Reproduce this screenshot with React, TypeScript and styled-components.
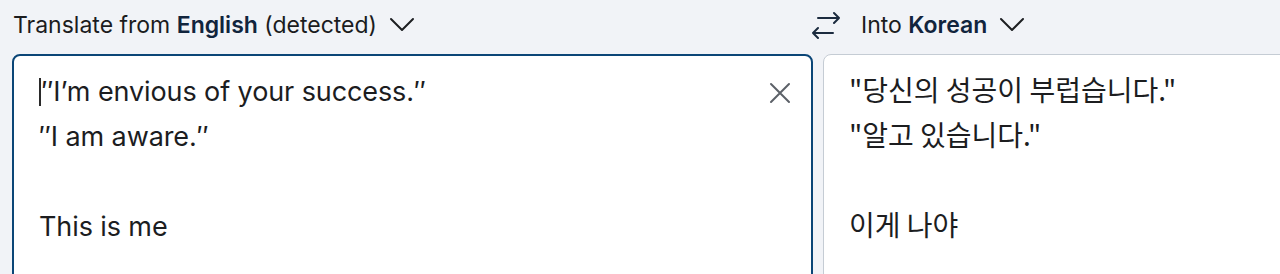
import styled, { createGlobalStyle } from "styled-components";

const Global = createGlobalStyle`
  html, body {
    margin: 0;
    padding: 0;
    background: #f1f3f7;
    overflow: hidden;
  }
  body {
    font-family: Inter, "Noto Sans", sans-serif;
    color: #1b1c1e;
  }
`;

const Page = styled.div`
  width: 1280px;
  height: 274px;
  overflow: hidden;
`;

const Header = styled.div`
  display: grid;
  grid-template-columns: 799px 1fr;
  height: 54px;
  padding: 0 0 5px 13px;
  box-sizing: border-box;
`;

const LangPicker = styled.div`
  display: flex;
  align-items: center;
  gap: 11px;
  font-size: 23px;
  letter-spacing: 0;
  color: #1b1c1e;

  b {
    font-weight: 600;
    color: #11243d;
  }
`;

const TargetSide = styled.div`
  display: flex;
  align-items: center;
  gap: 21px;
`;

const Panels = styled.div`
  display: grid;
  grid-template-columns: 801px 801px;
  gap: 10px;
  padding-left: 12px;
`;

const Panel = styled.div<{ $active?: boolean }>`
  position: relative;
  box-sizing: border-box;
  height: 260px;
  background: #ffffff;
  border: ${(p) => (p.$active ? "2px solid #0b4677" : "1.5px solid #c5ccd4")};
  border-radius: 8px;
  padding: ${(p) => (p.$active ? "13px 60px 0 25px" : "12px 40px 0 25px")};
`;

const Text = styled.div<{ $ko?: boolean }>`
  font-family: ${(p) =>
    p.$ko ? `"Noto Sans CJK KR", "Noto Sans", sans-serif` : `Inter, "Noto Sans", sans-serif`};
  font-size: ${(p) => (p.$ko ? "28px" : "27px")};
  line-height: 45px;
  color: #1c1d1f;
  white-space: pre-wrap;
  letter-spacing: ${(p) => (p.$ko ? "0" : "-0.1px")};
`;

const Caret = styled.span`
  display: inline-block;
  width: 1.5px;
  height: 28px;
  margin-right: 1px;
  background: #2a2a2a;
  vertical-align: -5px;
`;

const ClearButton = styled.button`
  position: absolute;
  top: 24px;
  right: 18px;
  width: 26px;
  height: 26px;
  padding: 0;
  border: none;
  background: none;
  display: flex;
  align-items: center;
  justify-content: center;
`;

const Chevron = () => (
  <svg width="28" height="15" viewBox="0 0 28 15" fill="none">
    <path d="M3 2 L14 13 L25 2" stroke="#1d1f22" strokeWidth="2" strokeLinecap="round" strokeLinejoin="round" />
  </svg>
);

const SwapIcon = () => (
  <svg width="28" height="28" viewBox="0 0 28 28" fill="none">
    <path d="M6 7 H27 M22 2 L27 7 L22 12" stroke="#1c2b3f" strokeWidth="2" strokeLinecap="round" strokeLinejoin="round" />
    <path d="M21 22 H1 M6 17 L1 22 L6 27" stroke="#1c2b3f" strokeWidth="2" strokeLinecap="round" strokeLinejoin="round" />
  </svg>
);

const XIcon = () => (
  <svg width="22" height="22" viewBox="0 0 22 22" fill="none">
    <path d="M2 2 L20 20 M20 2 L2 20" stroke="#5c6168" strokeWidth="2" strokeLinecap="round" />
  </svg>
);

export default function App() {
  return (
    <Page>
      <Global />
      <Header>
        <LangPicker>
          <span>
            Translate from <b>English</b> (detected)
          </span>
          <Chevron />
        </LangPicker>
        <TargetSide>
          <SwapIcon />
          <LangPicker>
            <span>
              Into <b>Korean</b>
            </span>
            <Chevron />
          </LangPicker>
        </TargetSide>
      </Header>
      <Panels>
        <Panel $active>
          <Text>
            <Caret />
            {"″I’m envious of your success.″\n″I am aware.″\n\nThis is me"}
          </Text>
          <ClearButton aria-label="Clear">
            <XIcon />
          </ClearButton>
        </Panel>
        <Panel>
          <Text $ko>{"\"당신의 성공이 부럽습니다.\"\n\"알고 있습니다.\"\n\n이게 나야"}</Text>
        </Panel>
      </Panels>
    </Page>
  );
}
